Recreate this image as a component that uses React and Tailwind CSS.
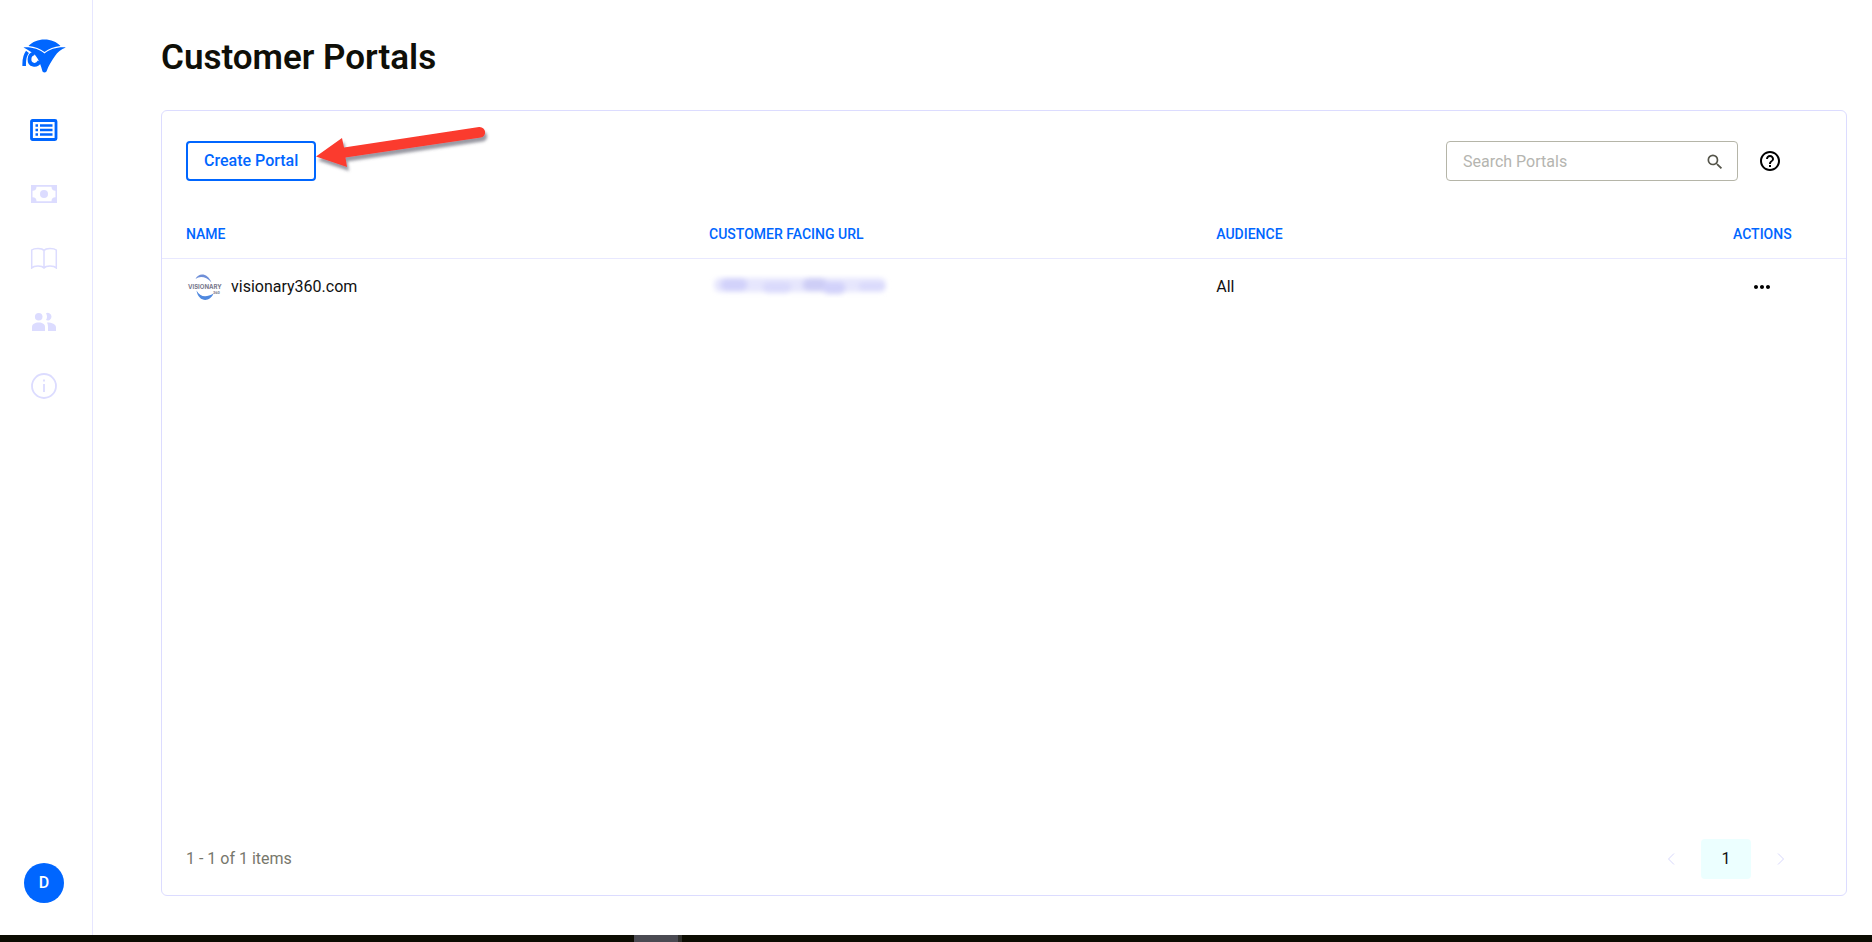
import { useState } from 'react'
import { MdHelpOutline, MdMoreHoriz, MdSearch } from 'react-icons/md'

const portals = [
  { id: 1, name: 'visionary360.com', audience: 'All' },
]

function Logo() {
  return (
    <svg width="44" height="34" viewBox="0 0 44 34" fill="none">
      <path d="M6.500 7C10.500 2.800 16 .5 22.500 .5S34.500 2.800 38.500 7C32 7.800 27 9.800 22.500 13C18 9.800 13 7.800 6.500 7Z" fill="#0066ff" />
      <path d="M1.500 8.500C9 7.800 17 10 22.500 14.500C28 10 36 7.800 43.800 8.500C39 10.200 35.500 13 33 17C29.500 22 26.500 26.500 24.500 32.500Q22.500 34.500 20.500 32.500C19 27 17 20.500 13.500 16.500C10 13 6 11 1.500 8.500Z" fill="#0066ff" />
      <path d="M5.500 12.800Q1.800 17.500 2.200 27" stroke="#0066ff" strokeWidth="3.600" />
      <path d="M12 14.500C6.200 15.500 6 24.500 11.300 25.700C13.500 26.200 16 25.200 17.500 22.500" stroke="#0066ff" strokeWidth="3.800" />
    </svg>
  )
}

function ListIcon() {
  return (
    <svg width="28" height="22" viewBox="0 0 28 22" fill="none" stroke="currentColor">
      <rect x="1.500" y="1.500" width="24.500" height="19" rx="1" strokeWidth="2.800" />
      <path d="M5.500 6.500h2.500M5.500 11h2.500M5.500 15.500h2.500M10 6.500h12.500M10 11h12.500M10 15.500h12.500" strokeWidth="2.400" />
    </svg>
  )
}

function MoneyIcon() {
  return (
    <svg width="28" height="20" viewBox="0 0 28 20" fill="currentColor">
      <path fillRule="evenodd" d="M1 1h26v18H1ZM6.500 2.700a4 4 0 0 1-4 4v6.600a4 4 0 0 1 4 4h15a4 4 0 0 1 4-4V6.700a4 4 0 0 1-4-4Z" />
      <circle cx="14" cy="10" r="4" />
    </svg>
  )
}

function BookIcon() {
  return (
    <svg width="28" height="22" viewBox="0 0 28 22" fill="none" stroke="currentColor" strokeWidth="1.500">
      <path d="M14 21V3.500C12.500 1.500 10 1.500 8 1.500S3.500 1.500 1.700 3v18C3.500 19 6 19 8 19s4.500 0 6 2c1.500-2 4-2 6-2s4.500 0 6.300 2V3C24.500 1.500 22 1.500 20 1.500s-4.500 0-6 2" />
    </svg>
  )
}

function PeopleIcon() {
  return (
    <svg width="28" height="20" viewBox="0 0 28 20" fill="currentColor">
      <circle cx="8.700" cy="4.700" r="3.800" />
      <path d="M2 19v-4c0-3 3-4.500 6.700-4.500S15 12 15 15v4Z" />
      <path d="M16 1.300a3.800 3.800 0 1 1 0 6.800q2-3.400 0-6.800ZM17 10.500c5 0 9 1.500 9 5V19h-8v-4q0-3-1-4.500Z" />
    </svg>
  )
}

function InfoIcon() {
  return (
    <svg width="28" height="28" viewBox="0 0 28 28" fill="none" stroke="currentColor" strokeWidth="1.800">
      <circle cx="14" cy="14" r="12" />
      <path d="M14 12v8M14 7.500v2" />
    </svg>
  )
}

function PortalLogo() {
  return (
    <svg width="36" height="28" viewBox="0 0 36 28" fill="none">
      <path d="M9.500 6C12.500 -.5 21.500 -.5 25.500 9.500C20 3.500 14 2.500 9.500 6Z" fill="#6f8fd8" />
      <path d="M10.500 17.500C14 24 20 25 27.500 20.500C24 29.500 12.500 29.500 10.500 17.500Z" fill="#4f88df" />
      <text x="2" y="16" fontSize="6" fontWeight="700" fontFamily="Inter, sans-serif" fill="#77778c">VISIONARY</text>
      <text x="27" y="21" fontSize="4" fontWeight="700" fontFamily="Roboto, sans-serif" fill="#77778c">360</text>
    </svg>
  )
}

function Arrow() {
  return (
    <svg width="176" height="56" viewBox="0 0 176 56" className="pointer-events-none absolute left-full -top-5 max-w-none">
      <defs>
        <filter id="arrow-shadow" x="-10%" y="-20%" width="120%" height="150%">
          <feDropShadow dx="2" dy="4" stdDeviation="1.500" floodColor="#555566" floodOpacity="0.600" />
        </filter>
      </defs>
      <path
        d="M0 35.500L26 17L28 26.500L163 6C170 5.500 171.500 15 165 16.500L29.500 36.500L31 46Z"
        fill="#fb3a2e"
        filter="url(#arrow-shadow)"
      />
    </svg>
  )
}

function Chevron({ flip }) {
  return (
    <svg width="8" height="12" viewBox="0 0 8 12" fill="none" stroke="#d6d6fb" className={flip ? 'rotate-180' : ''}>
      <path d="M7 .5L1.500 6L7 11.500" />
    </svg>
  )
}

const navItems = [
  { label: 'Portals', icon: ListIcon, active: true },
  { label: 'Billing', icon: MoneyIcon },
  { label: 'Documentation', icon: BookIcon },
  { label: 'Customers', icon: PeopleIcon },
  { label: 'About', icon: InfoIcon },
]

function Sidebar() {
  return (
    <aside className="flex w-[93px] shrink-0 flex-col border-r border-[#e6e6ff] pl-5 pt-9 pb-8">
      <a href="#home" aria-label="Home" className="flex h-10 w-12 items-center justify-center">
        <Logo />
      </a>
      <nav className="mt-[38px] flex flex-col gap-8">
        {navItems.map(({ label, icon: Icon, active }) => (
          <a
            key={label}
            href={`#${label.toLowerCase()}`}
            aria-label={label}
            className={`flex h-8 w-12 items-center justify-center ${active ? 'text-[#0066ff]' : 'text-[#dcdcff]'}`}
          >
            <Icon />
          </a>
        ))}
      </nav>
      <button
        aria-label="Account"
        className="mt-auto ml-1 flex h-10 w-10 items-center justify-center rounded-full bg-[#0066ff] text-base font-medium text-white"
      >
        D
      </button>
    </aside>
  )
}

export default function App() {
  const [search, setSearch] = useState('')

  const rows = portals.filter((p) => p.name.includes(search.trim().toLowerCase()))

  return (
    <div className="flex min-h-screen flex-col bg-white font-[Roboto,sans-serif] text-[#111111]">
      <div className="flex flex-1">
        <Sidebar />

        <main className="flex min-w-0 flex-1 flex-col pt-9 pr-[25px] pb-[39px] pl-[68px]">
          <h1 className="text-[35px] leading-[44px] font-semibold text-[#0f0f08]">Customer Portals</h1>

          <section className="mt-[30px] flex flex-1 flex-col rounded-md border border-[#dcdcff]">
            {/* Toolbar */}
            <div className="flex items-center justify-between pt-[30px] pr-16 pl-6">
              <div className="relative">
                <button className="h-10 rounded-sm border-2 border-[#0066ff] px-4 text-base font-medium text-[#0066ff]">
                  Create Portal
                </button>
                <Arrow />
              </div>

              <div className="flex items-center gap-5">
                <label className="flex h-10 w-[292px] items-center rounded-sm border border-[#b5b5a8] pt-px pr-3 pl-4">
                  <input
                    type="text"
                    aria-label="Search Portals"
                    placeholder="Search Portals"
                    value={search}
                    onChange={(e) => setSearch(e.target.value)}
                    className="min-w-0 flex-1 text-base outline-none placeholder:text-[#b5b5b0]"
                  />
                  <MdSearch className="size-5 text-[#55554a]" />
                </label>
                <button aria-label="Help">
                  <MdHelpOutline className="size-6 text-black" />
                </button>
              </div>
            </div>

            <table className="mt-7 w-full table-fixed text-left">
              <thead>
                <tr className="h-[49px] border-b border-[#e8e8ff] text-sm text-[#0066ff]">
                  <th className="w-[31%] pt-0.5 pl-6 font-medium">NAME</th>
                  <th className="w-[30%] pt-0.5 pl-[25px] font-medium">CUSTOMER FACING URL</th>
                  <th className="pt-0.5 pl-[27px] font-medium">AUDIENCE</th>
                  <th className="w-[113px] pt-0.5 font-medium">ACTIONS</th>
                </tr>
              </thead>
              <tbody>
                {rows.map((portal) => (
                  <tr key={portal.id} className="h-14 text-base">
                    <td className="pt-0.5 pl-6">
                      <div className="flex items-center gap-[9px]">
                        <PortalLogo />
                        {portal.name}
                      </div>
                    </td>
                    <td className="pl-[25px]">
                      {/* Redacted URL */}
                      <svg width="184" height="24" viewBox="0 0 184 24">
                        <defs>
                          <filter id="smudge" x="-10%" y="-50%" width="120%" height="200%">
                            <feGaussianBlur stdDeviation="2.500" />
                          </filter>
                        </defs>
                        <g filter="url(#smudge)" fill="#e0e0fd">
                          <rect x="5" y="4" width="172" height="14" rx="6" opacity="0.800" />
                          <rect x="12" y="4" width="26" height="13" rx="6" fill="#d2d2fa" />
                          <rect x="54" y="8" width="28" height="11" rx="5" fill="#dadafc" />
                          <rect x="94" y="4" width="24" height="13" rx="6" fill="#cecef6" />
                          <rect x="114" y="8" width="22" height="12" rx="5" fill="#d2d2fa" />
                          <rect x="150" y="8" width="26" height="9" rx="4" fill="#dadafc" />
                        </g>
                      </svg>
                    </td>
                    <td className="pt-0.5 pl-[27px]">{portal.audience}</td>
                    <td className="pt-0.5">
                      <button aria-label="Portal actions" className="ml-[17px] flex">
                        <MdMoreHoriz className="size-6 text-black" />
                      </button>
                    </td>
                  </tr>
                ))}
              </tbody>
            </table>

            {/* Pagination */}
            <div className="mt-auto flex items-center justify-between pr-[61px] pb-4 pl-6">
              <p className="text-base text-[#77776c]">1 - 1 of 1 items</p>
              <div className="flex items-center gap-[26px]">
                <button aria-label="Previous page" disabled>
                  <Chevron />
                </button>
                <button className="h-10 w-[50px] rounded-sm bg-[#ecffff] text-base">1</button>
                <button aria-label="Next page" disabled>
                  <Chevron flip />
                </button>
              </div>
            </div>
          </section>
        </main>
      </div>

      <footer className="flex h-[7px] bg-[#0c0c02]">
        <div className="ml-[634px] w-11 bg-[#4a4a52]" />
        <div className="w-1 bg-[#2e2e2a]" />
      </footer>
    </div>
  )
}
